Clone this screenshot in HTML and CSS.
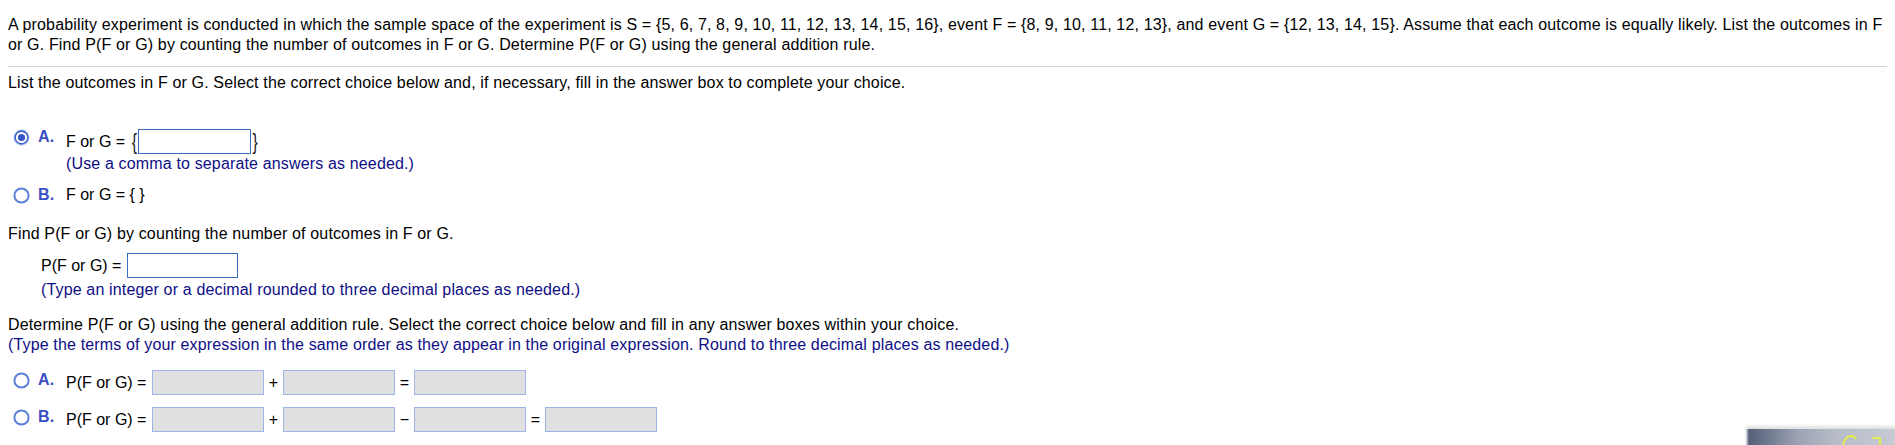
FILE: index.html
```html
<!DOCTYPE html>
<html>
<head>
<meta charset="utf-8">
<link rel="stylesheet" href="styles.css">
</head>
<body>
<div class="page">
  <p class="question">A probability experiment is conducted in which the sample space of the experiment is S = {5, 6, 7, 8, 9, 10, 11, 12, 13, 14, 15, 16}, event F = {8, 9, 10, 11, 12, 13}, and event G = {12, 13, 14, 15}. Assume that each outcome is equally likely. List the outcomes in F or G. Find P(F or G) by counting the number of outcomes in F or G. Determine P(F or G) using the general addition rule.</p>
  <hr class="sep">

  <p class="prompt p1">List the outcomes in F or G. Select the correct choice below and, if necessary, fill in the answer box to complete your choice.</p>

  <div class="choices c1">
    <div class="choice">
      <span class="radio"><svg width="17" height="17" viewBox="0 0 17 17"><circle cx="8.5" cy="8.5" r="8.2" fill="#cbd6f4"/><circle cx="8.5" cy="8.5" r="6.4" fill="#fff" stroke="#3d62c9" stroke-width="1.6"/><circle cx="8.5" cy="8.5" r="3.6" fill="#3653c7"/></svg></span>
      <span class="letter">A.</span>
      <div class="body">
        <div class="expr first"><span>F or G =</span><span class="brace open">{</span><span class="box active wide"></span><span class="brace close">}</span></div>
        <div class="hint">(Use a comma to separate answers as needed.)</div>
      </div>
    </div>
    <div class="choice gap">
      <span class="radio"><svg width="17" height="17" viewBox="0 0 17 17"><circle cx="8.5" cy="8.5" r="7.1" fill="#fff" stroke="#5a80d8" stroke-width="2"/></svg></span>
      <span class="letter">B.</span>
      <div class="body">
        <div class="expr"><span>F or G = { }</span></div>
      </div>
    </div>
  </div>

  <p class="prompt p2">Find P(F or G) by counting the number of outcomes in F or G.</p>
  <div class="indent">
    <div class="expr"><span>P(F or G) =</span><span class="box active mid"></span></div>
    <div class="hint">(Type an integer or a decimal rounded to three decimal places as needed.)</div>
  </div>

  <p class="prompt p3">Determine P(F or G) using the general addition rule. Select the correct choice below and fill in any answer boxes within your choice.</p>
  <p class="hint">(Type the terms of your expression in the same order as they appear in the original expression. Round to three decimal places as needed.)</p>

  <div class="choices c3">
    <div class="choice">
      <span class="radio"><svg width="17" height="17" viewBox="0 0 17 17"><circle cx="8.5" cy="8.5" r="7.1" fill="#fff" stroke="#5a80d8" stroke-width="2"/></svg></span>
      <span class="letter">A.</span>
      <div class="body">
        <div class="expr"><span>P(F or G) =</span><span class="box off"></span><span class="op">+</span><span class="box off"></span><span class="op">=</span><span class="box off"></span></div>
      </div>
    </div>
    <div class="choice gap2">
      <span class="radio"><svg width="17" height="17" viewBox="0 0 17 17"><circle cx="8.5" cy="8.5" r="7.1" fill="#fff" stroke="#5a80d8" stroke-width="2"/></svg></span>
      <span class="letter">B.</span>
      <div class="body">
        <div class="expr"><span>P(F or G) =</span><span class="box off"></span><span class="op">+</span><span class="box off"></span><span class="op">&#8722;</span><span class="box off"></span><span class="op">=</span><span class="box off"></span></div>
      </div>
    </div>
  </div>
</div>

<div class="helper"><span class="helper-mark"></span><span class="helper-mark small"></span></div>
</body>
</html>
```

FILE: styles.css
```css
html, body {
  background: #fff;
}
body {
  margin: 8px;
  font-family: "Liberation Sans", Arial, sans-serif;
  font-size: 16px;
  line-height: 20px;
  letter-spacing: 0.15px;
  color: #000;
  overflow: hidden;
}
p {
  margin: 0;
}
.question {
  margin-top: 7px;
}
.sep {
  border: 0;
  border-top: 1px solid #cfcfd4;
  height: 0;
  margin: 11px -8px 0 -4px;
}
.p1 {
  margin-top: 6px;
}
.c1 {
  margin-top: 34px;
}
.choice {
  display: flex;
  align-items: flex-start;
}
.choice.gap {
  margin-top: 11px;
}
.choice.gap2 {
  margin-top: 12px;
}
.radio {
  width: 17px;
  height: 17px;
  margin-left: 4.5px;
  margin-top: 1.5px;
  flex: none;
}
.radio svg {
  display: block;
}
.letter {
  width: 28px;
  margin-left: 8.5px;
  font-weight: bold;
  color: #3b4fc2;
  flex: none;
}
.body {
  display: flex;
  flex-direction: column;
}
.expr {
  display: flex;
  align-items: center;
  min-height: 20px;
  white-space: pre;
  letter-spacing: 0;
}
.expr.first {
  padding-top: 2px;
}
.hint {
  color: #0e0e86;
}
.box {
  display: inline-block;
  box-sizing: border-box;
  width: 112px;
  height: 25px;
  margin-left: 5.5px;
  flex: none;
}
.box.active {
  background: #fff;
  border: 1px solid #3a6cc8;
}
.box.wide {
  width: 113px;
  margin-left: 1.5px;
}
.box.mid {
  width: 111px;
  margin-left: 5.5px;
}
.box.off {
  background: #e0e0e0;
  border: 1px solid #9cb5e6;
}
.op {
  display: inline-block;
  margin: 0 4.8px 0 4.8px;
}
.op + .box {
  margin-left: 0;
}
.brace {
  display: inline-block;
  transform: scaleY(1.4);
  color: #222;
}
.brace.open {
  margin-left: 6.5px;
}
.brace.close {
  margin-left: 1px;
}
.p2 {
  margin-top: 19px;
}
.indent {
  margin-left: 33px;
  margin-top: 9px;
}
.indent .hint {
  margin-top: 2px;
}
.p3 {
  margin-top: 15px;
}
.c3 {
  margin-top: 15px;
}
.helper {
  position: fixed;
  left: 1746px;
  top: 429px;
  right: 0;
  bottom: 0;
  overflow: hidden;
  background: linear-gradient(90deg, #dfe2e8 0px, #56617a 3px, #6c768c 20px, #9aa1b2 50px, #b7bcc8 90px, #c6cad3 149px);
  box-shadow: 0 -3px 3px rgba(0, 0, 0, 0.12);
}
.helper-mark {
  position: absolute;
  left: 96px;
  top: 6px;
  width: 14px;
  height: 20px;
  border: 2px solid #e2ec4e;
  border-right-color: transparent;
  border-radius: 50%;
}
.helper-mark.small {
  left: 125px;
  top: 8px;
  width: 6px;
  height: 14px;
  border-radius: 2px;
  border-right-color: #e2ec4e;
  border-bottom-color: transparent;
  border-left-color: transparent;
}
```
